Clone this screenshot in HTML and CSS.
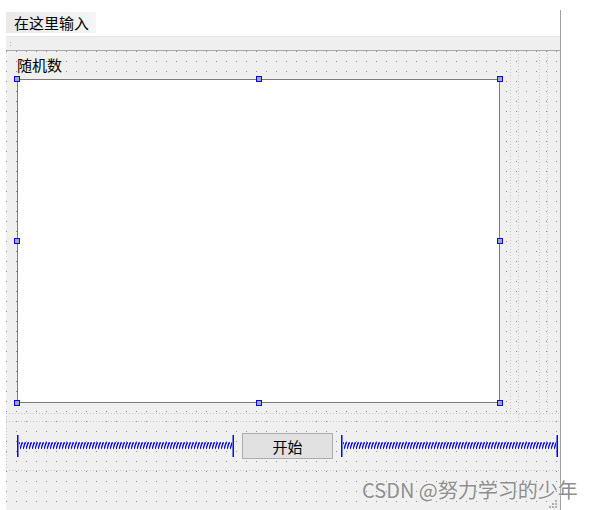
FILE: index.html
```html
<!DOCTYPE html>
<html lang="zh">
<head>
    <meta charset="UTF-8">
    <title>随机数</title>
    <link rel="stylesheet" href="styles.css">
</head>
<body>
    <div class="window">
        <div class="menubar">
            <span class="menu-item">在这里输入</span>
        </div>
        <div class="toolbar">
            <span class="grip"></span>
        </div>
        <div class="form">
            <div class="label">随机数</div>
            <div class="text-edit">
                <span class="handle top left"></span>
                <span class="handle top center"></span>
                <span class="handle top right"></span>
                <span class="handle middle left"></span>
                <span class="handle middle right"></span>
                <span class="handle bottom left"></span>
                <span class="handle bottom center"></span>
                <span class="handle bottom right"></span>
            </div>
            <div class="button-row">
                <svg class="spacer" width="217" height="22" viewBox="0 0 217 22">
                    <defs>
                        <pattern id="zig" width="3" height="22" patternUnits="userSpaceOnUse">
                            <polyline points="0,14 2,8 3,8" fill="none" stroke="#0000ff" stroke-width="1.3"/>
                        </pattern>
                    </defs>
                    <rect x="2" y="7" width="213" height="8" fill="url(#zig)"/>
                    <rect x="0" y="0" width="1.5" height="22" fill="#0000ff"/>
                    <rect x="215.5" y="0" width="1.5" height="22" fill="#0000ff"/>
                </svg>
                <button class="start">开始</button>
                <svg class="spacer" width="217" height="22" viewBox="0 0 217 22">
                    <rect x="2" y="7" width="213" height="8" fill="url(#zig)"/>
                    <rect x="0" y="0" width="1.5" height="22" fill="#0000ff"/>
                    <rect x="215.5" y="0" width="1.5" height="22" fill="#0000ff"/>
                </svg>
            </div>

            <!-- layout guides drawn by the designer -->
            <span class="guide v" style="left: 504px; height: 362px;"></span>
            <span class="guide v" style="left: 512px; height: 370px;"></span>
            <span class="guide v" style="left: 533px; height: 370px;"></span>
            <span class="guide v" style="left: 541px; height: 362px;"></span>
            <span class="guide v" style="left: 0; top: 362px; height: 57px;"></span>
            <span class="guide h" style="top: 362px;"></span>
            <span class="guide h" style="top: 370px;"></span>
            <span class="guide h" style="top: 419px;"></span>

            <svg class="size-grip" width="10" height="10" viewBox="0 0 10 10">
                <rect x="7" y="1" width="2" height="2" fill="#b0b0b0"/>
                <rect x="4" y="4" width="2" height="2" fill="#b0b0b0"/>
                <rect x="7" y="4" width="2" height="2" fill="#b0b0b0"/>
                <rect x="1" y="7" width="2" height="2" fill="#b0b0b0"/>
                <rect x="4" y="7" width="2" height="2" fill="#b0b0b0"/>
                <rect x="7" y="7" width="2" height="2" fill="#b0b0b0"/>
            </svg>
        </div>
    </div>

    <div class="watermark">CSDN @努力学习的少年</div>
</body>
</html>
```

FILE: styles.css
```css
body {
    margin: 0;
    background: #ffffff;
    font-family: "Noto Sans CJK SC", "Noto Sans", sans-serif;
    position: relative;
    height: 510px;
    overflow: hidden;
}

.window {
    margin: 10px 0 0 6px;
    width: 554px;
    height: 500px;
    border-right: 1px solid #a0a0a0;
}

.menubar {
    height: 26px;
    background: #ffffff;
    border-bottom: 1px solid #e6e6e6;
}

.menu-item {
    display: inline-block;
    margin-top: 2px;
    width: 82px;
    height: 21px;
    padding-left: 8px;
    font-size: 15px;
    line-height: 21px;
    color: #000;
    background: linear-gradient(to right, #e9e9e9, #f6f6f6);
}

.toolbar {
    position: relative;
    height: 13px;
    background: #efefef;
    border-bottom: 1px solid #a8a8a8;
}

.grip {
    position: absolute;
    left: 4px;
    top: 5px;
    width: 1px;
    height: 1px;
    background: #b4b4b4;
    box-shadow: 0 3px 0 #b4b4b4;
}

.form {
    position: relative;
    height: 459px;
    padding-left: 11px;
    background-color: #f0f0f0;
    background-image: conic-gradient(from 270deg at 1px 1px, #8a8a8a 90deg, transparent 0);
    background-size: 10px 10px;
}

.label {
    padding-top: 4px;
    height: 20px;
    font-size: 15px;
    line-height: 20px;
    color: #000;
}

.text-edit {
    position: relative;
    margin-top: 4px;
    width: 481px;
    height: 322px;
    background: #ffffff;
    border: 1px solid #7a7a7a;
}

.handle {
    position: absolute;
    box-sizing: border-box;
    width: 6px;
    height: 6px;
    background: #a4a4b4;
    border: 1px solid #0000ff;
    z-index: 2;
}

.handle.top { top: -4px; }
.handle.middle { top: calc(50% - 3px); }
.handle.bottom { bottom: -4px; }
.handle.left { left: -4px; }
.handle.center { left: calc(50% - 3px); }
.handle.right { right: -4px; }

.button-row {
    display: flex;
    align-items: center;
    gap: 8px;
    margin-top: 30px;
    height: 26px;
}

.spacer {
    display: block;
    flex: none;
}

.start {
    width: 91px;
    height: 26px;
    padding: 0;
    font-family: inherit;
    font-size: 15px;
    color: #000;
    background: #e1e1e1;
    border: 1px solid #adadad;
}

.guide {
    position: absolute;
    top: 0;
}

.guide.v {
    width: 1px;
    background: repeating-linear-gradient(to bottom, #c6c6c6 0 1px, transparent 1px 3px);
}

.guide.h {
    left: 0;
    width: 554px;
    height: 1px;
    background: repeating-linear-gradient(to right, #c6c6c6 0 1px, transparent 1px 3px);
}

.size-grip {
    position: absolute;
    left: 542px;
    top: 448px;
}

.watermark {
    position: absolute;
    left: 362px;
    top: 476px;
    font-size: 20px;
    line-height: 28px;
    color: #8e8e8e;
    text-shadow: 0 0 2px #ffffff;
    white-space: nowrap;
}
```
